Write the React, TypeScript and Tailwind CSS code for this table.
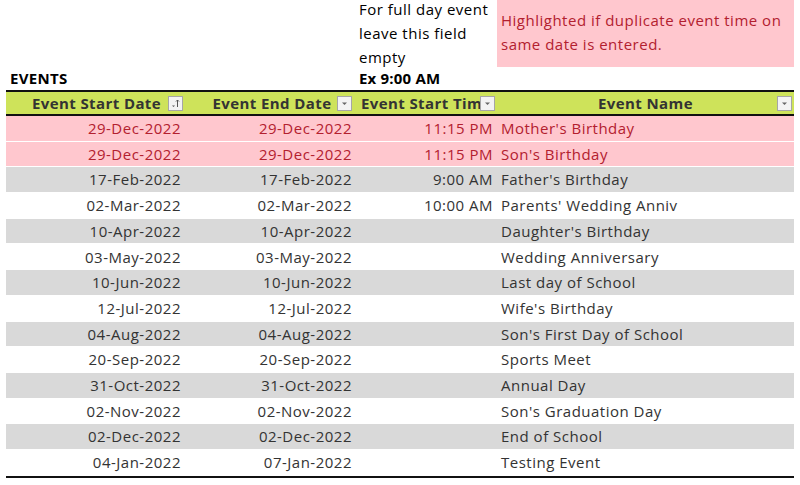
const rows: { start: string; end: string; time: string; name: string; dup?: boolean }[] = [
  { start: "29-Dec-2022", end: "29-Dec-2022", time: "11:15 PM", name: "Mother's Birthday", dup: true },
  { start: "29-Dec-2022", end: "29-Dec-2022", time: "11:15 PM", name: "Son's Birthday", dup: true },
  { start: "17-Feb-2022", end: "17-Feb-2022", time: "9:00 AM", name: "Father's Birthday" },
  { start: "02-Mar-2022", end: "02-Mar-2022", time: "10:00 AM", name: "Parents' Wedding Anniv" },
  { start: "10-Apr-2022", end: "10-Apr-2022", time: "", name: "Daughter's Birthday" },
  { start: "03-May-2022", end: "03-May-2022", time: "", name: "Wedding Anniversary" },
  { start: "10-Jun-2022", end: "10-Jun-2022", time: "", name: "Last day of School" },
  { start: "12-Jul-2022", end: "12-Jul-2022", time: "", name: "Wife's Birthday" },
  { start: "04-Aug-2022", end: "04-Aug-2022", time: "", name: "Son's First Day of School" },
  { start: "20-Sep-2022", end: "20-Sep-2022", time: "", name: "Sports Meet" },
  { start: "31-Oct-2022", end: "31-Oct-2022", time: "", name: "Annual Day" },
  { start: "02-Nov-2022", end: "02-Nov-2022", time: "", name: "Son's Graduation Day" },
  { start: "02-Dec-2022", end: "02-Dec-2022", time: "", name: "End of School" },
  { start: "04-Jan-2022", end: "07-Jan-2022", time: "", name: "Testing Event" },
];

function FilterButton({ sorted }: { sorted?: boolean }) {
  return (
    <span className="flex h-[15px] w-[15px] shrink-0 items-center justify-center border border-[#a6a6a6] bg-[#f3f3f3]">
      <svg width="11" height="11" viewBox="0 0 11 11">
        {sorted ? (
          <>
            <path d="M2 7.5 L5 7.5 L3.5 9 Z" fill="#555" />
            <path d="M7.5 2 L7.5 9" stroke="#555" strokeWidth="1" />
            <path d="M6 3.5 L7.5 2 L9 3.5" stroke="#555" strokeWidth="1" fill="none" />
          </>
        ) : (
          <path d="M3 4.5 L8 4.5 L5.5 7 Z" fill="#666" />
        )}
      </svg>
    </span>
  );
}

export default function App() {
  return (
    <div
      className="h-[485px] w-[800px] overflow-hidden bg-white text-[15px] tracking-[0.5px] text-[#333]"
      style={{ fontFamily: '"Open Sans", "Liberation Sans", sans-serif' }}
    >
      {/* notes above the table */}
      <div className="flex h-[90px] pl-[6px]">
        <div className="flex w-[351px] items-end pb-[2px] pl-[4px] font-bold leading-[20px] tracking-[0.3px] text-black">
          EVENTS
        </div>
        <div className="-mt-[3px] flex w-[140px] flex-col pl-[2px] leading-[24px] text-black">
          <span className="whitespace-nowrap">For full day event</span>
          <span>leave this field</span>
          <span>empty</span>
          <span className="mt-[-3px] font-bold tracking-[0.2px]">Ex 9:00 AM</span>
        </div>
        <div className="h-[67px] w-[297px] bg-[#ffc7ce] pl-[4px] pt-[8px] leading-[24px] text-[#b3202f]">
          Highlighted if duplicate event time on
          <br />
          same date is entered.
        </div>
      </div>

      {/* table */}
      <div className="ml-[6px] w-[788px] border-y-2 border-[#111]">
        <div className="grid h-[24px] grid-cols-[181px_170px_140px_297px] border-b-2 border-[#111] bg-[#cee35a] font-bold tracking-[0.4px]">
          <div className="relative flex items-center justify-center">
            Event Start Date
            <span className="absolute right-[4px] top-[4px]">
              <FilterButton sorted />
            </span>
          </div>
          <div className="relative flex items-center justify-center">
            Event End Date
            <span className="absolute right-[5px] top-[4px]">
              <FilterButton />
            </span>
          </div>
          <div className="flex items-center overflow-hidden pl-[4px]">
            <span className="w-[119px] overflow-hidden whitespace-nowrap">Event Start Time</span>
            <FilterButton />
          </div>
          <div className="relative flex items-center justify-center">
            Event Name
            <span className="absolute right-[2px] top-[4px]">
              <FilterButton />
            </span>
          </div>
        </div>
        {rows.map((r, i) => (
          <div
            key={i}
            className={`grid h-[25.7px] grid-cols-[181px_170px_140px_297px] items-center border-b border-white ${
              r.dup ? "bg-[#ffc7ce] text-[#b3202f]" : i % 2 === 0 ? "bg-[#d9d9d9]" : "bg-white"
            }`}
          >
            <div className="pr-[6px] text-right">{r.start}</div>
            <div className="pr-[5px] text-right">{r.end}</div>
            <div className="pr-[4px] text-right">{r.time}</div>
            <div className="whitespace-nowrap pl-[4px]">{r.name}</div>
          </div>
        ))}
      </div>
    </div>
  );
}
